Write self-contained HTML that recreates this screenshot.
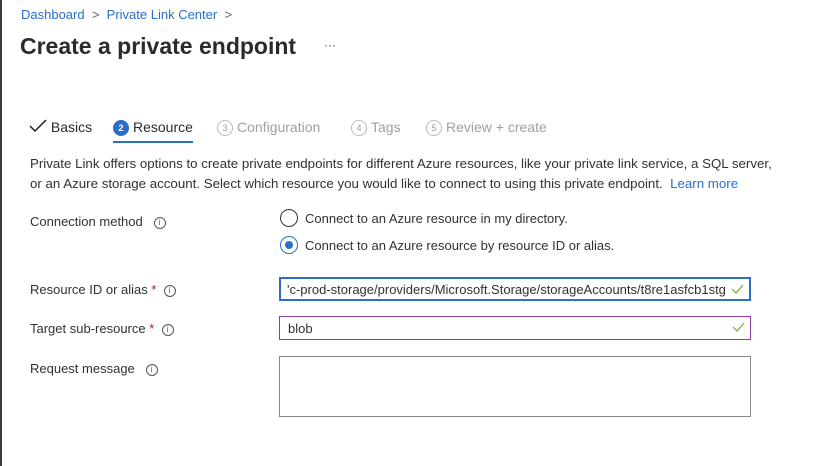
<!DOCTYPE html>
<html><head><style>
*{margin:0;padding:0;box-sizing:border-box}
body{width:822px;height:466px;background:#fff;font-family:"Liberation Sans",sans-serif;color:#323130;position:relative;overflow:hidden}
.a{position:absolute;white-space:nowrap}
.lnk{color:#2a6fc9}
.info{display:inline-block;width:12px;height:12px;border:1px solid #555;border-radius:50%;font-size:8px;text-align:center;line-height:10px;color:#555;vertical-align:middle}
.num{display:inline-block;width:16px;height:16px;border-radius:50%;font-size:9px;text-align:center;line-height:14px;vertical-align:1px;margin-right:4px}
.box{position:absolute;background:#fff}
.chk{position:absolute;right:5px;top:4px}
</style></head><body>
<div class="a" style="left:0;top:0;width:2px;height:466px;background:#3b3b3b"></div>
<div class="a lnk" style="left:21px;top:7px;font-size:13px">Dashboard <span style="color:#666">&nbsp;&gt;&nbsp;</span> Private Link Center <span style="color:#666">&nbsp;&gt;</span></div>
<div class="a" style="left:20px;top:33px;font-size:23px;font-weight:bold;color:#2b2b2b">Create a private endpoint</div>
<div class="a" style="left:324px;top:38px;font-size:12px;color:#444">···</div>

<div class="a" style="left:29px;top:119px;font-size:14px;color:#2b2b2b"><svg width="18" height="14" style="vertical-align:-1px"><path d="M1 7 L6 12 L17 1" stroke="#222" stroke-width="1.5" fill="none"/></svg> Basics</div>
<div class="a" style="left:113px;top:119px;font-size:14px;color:#2b2b2b"><span class="num" style="background:#2a6fc9;color:#fff;border:1px solid #2a6fc9;font-weight:bold">2</span>Resource</div>
<div class="a" style="left:113px;top:141px;width:80px;height:2px;background:#2a6fc9"></div>
<div class="a" style="left:217px;top:119px;font-size:14px;color:#a0a0a0"><span class="num" style="border:1px solid #bbb">3</span>Configuration</div>
<div class="a" style="left:351px;top:119px;font-size:14px;color:#a0a0a0"><span class="num" style="border:1px solid #bbb">4</span>Tags</div>
<div class="a" style="left:426px;top:119px;font-size:14px;color:#a0a0a0"><span class="num" style="border:1px solid #bbb">5</span>Review + create</div>

<div class="a" style="left:30px;top:154px;font-size:13.3px;line-height:20px;color:#323130">Private Link offers options to create private endpoints for different Azure resources, like your private link service, a SQL server,<br>or an Azure storage account. Select which resource you would like to connect to using this private endpoint. &nbsp;<span class="lnk">Learn more</span></div>

<div class="a" style="left:30px;top:214px;font-size:13px">Connection method &nbsp;&nbsp;<span class="info">i</span></div>
<div class="a" style="left:280px;top:209px;width:18px;height:18px;border:1px solid #333;border-radius:50%"></div>
<div class="a" style="left:305px;top:211px;font-size:13px">Connect to an Azure resource in my directory.</div>
<div class="a" style="left:280px;top:236px;width:18px;height:18px;border:1px solid #2a6fc9;border-radius:50%"><div style="position:absolute;left:4px;top:4px;width:8px;height:8px;border-radius:50%;background:#2a6fc9"></div></div>
<div class="a" style="left:305px;top:238px;font-size:13px">Connect to an Azure resource by resource ID or alias.</div>

<div class="a" style="left:30px;top:282px;font-size:13px">Resource ID or alias <span style="color:#a4262c">*</span> &nbsp;<span class="info">i</span></div>
<div class="box" style="left:279px;top:277px;width:472px;height:24px;border:2px solid #2a6fc9;overflow:hidden"><div style="position:absolute;left:6px;top:3px;font-size:13px;white-space:nowrap">'c-prod-storage/providers/Microsoft.Storage/storageAccounts/t8re1asfcb1stg</div><svg class="chk" width="13" height="11" style="background:#fff"><path d="M1 6 L5 10 L12 2" stroke="#6bb23b" stroke-width="1.2" fill="none"/></svg></div>

<div class="a" style="left:30px;top:321px;font-size:13px">Target sub-resource <span style="color:#a4262c">*</span> &nbsp;<span class="info">i</span></div>
<div class="box" style="left:279px;top:316px;width:472px;height:24px;border:1px solid #8a3ea6"><div style="position:absolute;left:8px;top:4px;font-size:13px">blob</div><svg class="chk" width="13" height="11"><path d="M1 6 L5 10 L12 2" stroke="#6bb23b" stroke-width="1.2" fill="none"/></svg></div>

<div class="a" style="left:30px;top:361px;font-size:13px">Request message &nbsp;&nbsp;<span class="info">i</span></div>
<div class="box" style="left:279px;top:356px;width:472px;height:61px;border:1px solid #8a8a8a"></div>
</body></html>
